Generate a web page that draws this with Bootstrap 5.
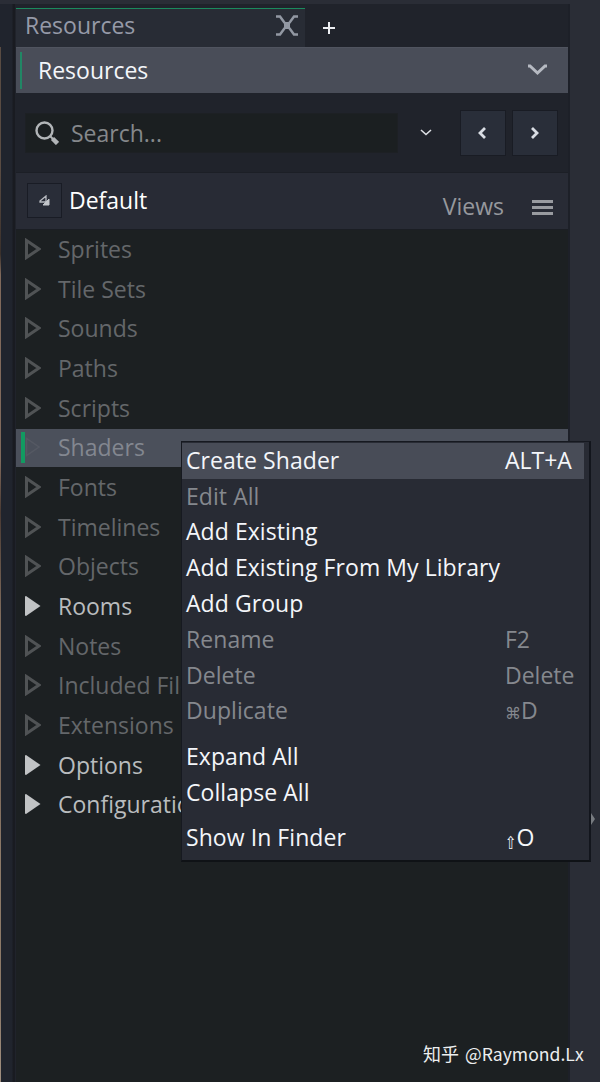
<!DOCTYPE html>
<html lang="en">
<head>
<meta charset="utf-8">
<meta name="viewport" content="width=device-width, initial-scale=1">
<title>Resources</title>
<link href="https://cdn.jsdelivr.net/npm/bootstrap@5.3.0/dist/css/bootstrap.min.css" rel="stylesheet">
<style>
body{width:600px;height:1082px;background:#22252e;font-family:"Open Sans","Noto Sans CJK SC",sans-serif;font-size:23px;line-height:30px;color:#f4f6fa;letter-spacing:0}
svg{display:block;flex:none}
.topline{height:4px;background:#2a2d36}
.gutter{width:15px;background:linear-gradient(90deg,#20242d 0 12px,#191b21 13px 15px)}
.gutter i{display:block;width:1px;height:1035px;margin-top:43px;background:linear-gradient(#594b42 0 12%,#3a302b 20%,#80695b 22% 40%,#493a33 45%,#806c5d 55% 72%,#8c7968 78% 92%,#a08f80)}
.panel{width:553px;background:#20232b;padding-left:1px}
.side{width:32px;background:#2a2d36;border-left:2px solid #1d2028}
.doctab{width:289px;height:39px;margin-top:4px;background:#282c35;border-top:1px solid #1b8a5d;padding:0 7px 0 9px;color:#969aa8}
.doctab span{margin-top:-7px}
.doctab svg{margin-top:-5px}
.plus{margin:17px 0 0 18px}
.headbar{height:46px;background:#494d58;border-top:1px solid #50545f;padding:0 20px 0 4px}
.headbar span{margin-top:-2px}
.accent{width:2px;height:37px;background:#218765;margin-right:16px}
.tools{height:79px;padding:0 8px 0 9px}
.searchbox{width:373px;height:40px;background:#1b1f21;color:#85888b;padding-left:9px;border:1px solid #1d2024}
.navbtn{width:46px;height:46px;background:#292e39;border:1px solid #191c24}
.viewbar{height:58px;background:#282b35;border-top:1px solid #1c1f26;border-bottom:1px solid #1b1e24;padding:0 15px 1px 11px;color:#96989d}
.iconbox{width:35px;height:35px;border:1px solid #191c25;background:#292d38}
.tree{background:#1c2022;height:852px}
.item{height:39.67px;padding:0 0 1.5px 9px;color:#64676a}
.item svg{margin-right:17px}
.item.full{color:#b9bcbe}
.item.chosen{height:38px;margin:.5px 0 1.17px;background:#4b505b;color:#838790;padding:0 0 1px 5px}
.item.chosen .mark-bar{width:4px;height:31px;background:#129a61}
.context{position:absolute;left:181px;top:441px;width:410px;height:421px;background:#282b34;border:1px solid #161920;border-right:2px solid #12151c;border-bottom:2px solid #0f1216;padding-top:1px;letter-spacing:.06px}
.entry{height:35.8px;padding:0 0 2px 4px;width:402px}
.entry .key{width:79px;white-space:nowrap;letter-spacing:0}
.entry.off{color:#85888e}
.entry.hot{background:#484c57}
.gap{height:9.8px}
.small-key{font-family:"DejaVu Sans",sans-serif;font-size:16px;line-height:1}
.shift-key{display:inline-block;width:12px;height:13px;margin-right:-.5px;font-family:"DejaVu Sans",sans-serif;font-size:14px;line-height:1;vertical-align:-2px;transform:scaleY(1.25)}
.handle{position:absolute;left:591px;top:813px}
.sign{position:absolute;left:423px;top:1039px;font-family:"Noto Sans CJK SC",sans-serif;font-size:18px;line-height:28px;color:#eceeef;white-space:nowrap}
.sign span{font-size:17.6px;margin-left:2px}
</style>
</head>
<body class="position-relative overflow-hidden d-flex flex-column">
<div class="topline flex-shrink-0"></div>
<div class="d-flex flex-grow-1">
<div class="gutter flex-shrink-0"><i></i></div>
<main class="panel flex-shrink-0">
<div class="d-flex align-items-start">
<div class="doctab d-flex align-items-center justify-content-between"><span>Resources</span>
<svg width="22" height="21" viewBox="0 0 22 21" fill="none" stroke="#9298a3" stroke-width="2.500"><path d="M0 1.500H4L8 7L14 14L18 19.500H22M22 1.500H18L14 7L8 14L4 19.500H0"/><path d="M11 7V14" stroke-width="6"/></svg></div>
<svg class="plus" width="12" height="14" viewBox="0 0 12 14" stroke="#eceef2" stroke-width="2"><path d="M6 1V13M0 7H12"/></svg>
</div>
<div class="headbar d-flex align-items-center"><div class="accent"></div><span class="flex-grow-1">Resources</span>
<svg width="21" height="12" viewBox="0 0 21 12" style="margin-top:-2px" fill="none" stroke="#b6bac2" stroke-width="3"><path d="M1 2H3L10.500 9L18 2H20"/></svg></div>
<div class="tools d-flex align-items-center">
<div class="searchbox d-flex align-items-center">
<svg width="24" height="24" viewBox="0 0 24 24" fill="none" stroke="#b2b5b8"><circle cx="9.500" cy="9.500" r="8" stroke-width="2.400"/><path d="M15 15L18 18" stroke-width="2"/><path d="M17.500 17.500L22.500 22.500" stroke-width="4.500"/></svg>
<span style="margin-left:12px">Search...</span></div>
<svg width="12" height="7" viewBox="0 0 12 7" style="margin-left:22px" fill="none" stroke="#dde0e4" stroke-width="1.600"><path d="M1 1L6 5.500L11 1"/></svg>
<div class="navbtn d-flex align-items-center justify-content-center" style="margin-left:28px"><svg width="8" height="12" viewBox="0 0 8 12" style="margin-right:2px" fill="none" stroke="#d9dde4" stroke-width="2.800"><path d="M7 1L2 6L7 11"/></svg></div>
<div class="navbtn d-flex align-items-center justify-content-center" style="margin-left:6px"><svg width="8" height="12" viewBox="0 0 8 12" style="margin-right:1px" fill="none" stroke="#d9dde4" stroke-width="2.800"><path d="M1 1L6 6L1 11"/></svg></div>
</div>
<div class="viewbar d-flex align-items-center">
<div class="iconbox d-flex align-items-center justify-content-center"><svg width="11" height="11" viewBox="0 0 11 11"><path d="M1 6L7 1V7H1Z" fill="none" stroke="#b7bac0" stroke-width="1.300"/><path d="M10 4V10H4Z" fill="#c2c5ca" stroke="#c2c5ca"/></svg></div>
<span class="flex-grow-1 text-white" style="margin:-1px 0 0 7px">Default</span>
<span style="margin-top:11px">Views</span>
<svg width="21" height="16" viewBox="0 0 21 16" style="margin:14px 0 0 28px" fill="#999ba0"><path d="M0 0H21V3H0ZM0 6H21V9H0ZM0 12H21V15H0Z"/></svg>
</div>
<div class="tree" id="tree"></div>
</main>
<div class="side"></div>
</div>
<svg class="handle" width="5" height="12" viewBox="0 0 5 12"><path d="M0 0L4 6L0 12Z" fill="#777b80"/></svg>
<div class="context" id="context"></div>
<div class="sign">知乎 <span>@Raymond.Lx</span></div>
<script>
const rows=["Sprites","Tile Sets","Sounds","Paths","Scripts","Shaders","Fonts","Timelines","Objects","Rooms","Notes","Included Files","Extensions","Options","Configurations"];
const open='<svg width="16" height="22" viewBox="0 0 16 22"><path d="M1.500 2.500V19.500L14 11Z" fill="none" stroke="#505355" stroke-width="3"/></svg>';
const solid='<svg width="16" height="22" viewBox="0 0 16 22"><path d="M0 1.500L1 1L15.500 11L1 21L0 20.500Z" fill="#c1c3c5"/></svg>';
const faint='<svg width="16" height="22" viewBox="0 0 16 22"><path d="M1.500 2.500V19.500L14 11Z" fill="none" stroke="#555963" stroke-width="1.500"/></svg>';
document.getElementById("tree").innerHTML=rows.map(t=>{
 const full=["Rooms","Options","Configurations"].includes(t),sel=t==="Shaders";
 return `<div class="item d-flex align-items-center ${full?"full":""} ${sel?"chosen":""}">${sel?'<div class="mark-bar"></div>'+faint:full?solid:open}<span>${t}</span></div>`}).join("");
const menu=[["Create Shader","ALT+A","hot"],["Edit All","","off"],["Add Existing",""],["Add Existing From My Library",""],["Add Group",""],["Rename","F2","off"],["Delete","Delete","off"],["Duplicate",'<span class="small-key">⌘</span>D',"off"],0,["Expand All",""],["Collapse All",""],0,["Show In Finder",'<span class="shift-key">⇧</span>O']];
document.getElementById("context").innerHTML=menu.map(m=>m?`<div class="entry d-flex align-items-center ${m[2]||""}"><span class="flex-grow-1 text-nowrap">${m[0]}</span><span class="key">${m[1]}</span></div>`:'<div class="gap"></div>').join("");
</script>
<script src="https://cdn.jsdelivr.net/npm/bootstrap@5.3.0/dist/js/bootstrap.bundle.min.js"></script>
</body>
</html>
